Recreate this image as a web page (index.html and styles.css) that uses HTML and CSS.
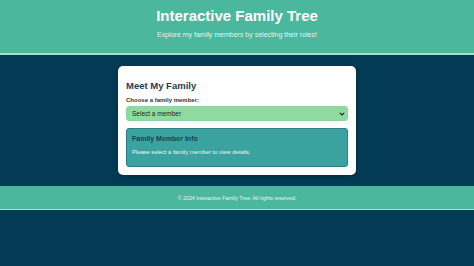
FILE: index.html
```html
<!DOCTYPE html>
<html lang="en">
<head>
    <meta charset="UTF-8">
    <meta name="viewport" content="width=device-width, initial-scale=1.0">
    <title>Interactive Family Tree</title>
    <link rel="stylesheet" href="styles.css">
</head>
<body>
    <header class="site-header">
        <h1>Interactive Family Tree</h1>
        <p>Explore my family members by selecting their roles!</p>
    </header>

    <main class="main">
        <section class="card">
            <h2>Meet My Family</h2>
            <label for="member" class="field-label">Choose a family member:</label>
            <div class="select-wrap">
                <select id="member" class="member-select">
                    <option>Select a member</option>
                </select>
                <svg class="select-arrow" width="6" height="4" viewBox="0 0 6 4">
                    <path d="M0.8 0.8 L3 3 L5.2 0.8" fill="none" stroke="#222" stroke-width="1.2"/>
                </svg>
            </div>
            <div class="info-box">
                <h3>Family Member Info</h3>
                <p>Please select a family member to view details.</p>
            </div>
        </section>
    </main>

    <footer class="site-footer">
        <p>&copy; 2024 Interactive Family Tree. All rights reserved.</p>
    </footer>
</body>
</html>
```

FILE: styles.css
```css
body {
    margin: 0;
    min-height: 100vh;
    background: #033b54;
    font-family: 'Liberation Sans', Arial, sans-serif;
}

.site-header {
    background: #4bb79c;
    color: #fff;
    text-align: center;
    height: 53px;
    border-bottom: 2px solid #a6e3c6;
    overflow: hidden;
}

.site-header h1 {
    margin: 0;
    padding-top: 6px;
    font-size: 15px;
    line-height: 19px;
}

.site-header p {
    margin: 6px 0 0;
    font-size: 7px;
    color: #e6f5ee;
}

.main {
    display: flex;
    justify-content: center;
    padding: 11px 0;
}

.card {
    width: 222px;
    background: #fff;
    border-radius: 5px;
    padding: 13px 8px 8px;
    box-shadow: 0 1px 4px rgba(0, 0, 0, 0.3);
}

.card h2 {
    margin: 0;
    font-size: 9.5px;
    line-height: 14px;
    color: #1d3e55;
}

.field-label {
    display: block;
    margin-top: 4px;
    font-size: 6px;
    font-weight: bold;
    color: #333;
}

.select-wrap {
    position: relative;
    margin-top: 3px;
}

.member-select {
    display: block;
    width: 100%;
    height: 15px;
    padding: 0 5px;
    font-size: 6.5px;
    font-family: inherit;
    color: #222;
    background: #8fdb9f;
    border: 1px solid #8fd3a0;
    border-radius: 3px;
    appearance: none;
    -webkit-appearance: none;
}

.select-arrow {
    position: absolute;
    right: 3px;
    top: 6px;
    pointer-events: none;
}

.info-box {
    margin-top: 7px;
    height: 37px;
    padding: 0 5px;
    background: #3ba39f;
    border: 1px solid #2c7e86;
    border-radius: 3px;
}

.info-box h3 {
    margin: 6px 0 0;
    font-size: 7px;
    color: #1d3e55;
}

.info-box p {
    margin: 7px 0 0;
    font-size: 5.8px;
    color: #e8f6f4;
}

.site-footer {
    height: 23px;
    background: #4bb79c;
    border-bottom: 1px solid #a6e3c6;
    display: flex;
    align-items: center;
    justify-content: center;
}

.site-footer p {
    margin: 0;
    font-size: 5.3px;
    color: #eaf7f1;
}
```
